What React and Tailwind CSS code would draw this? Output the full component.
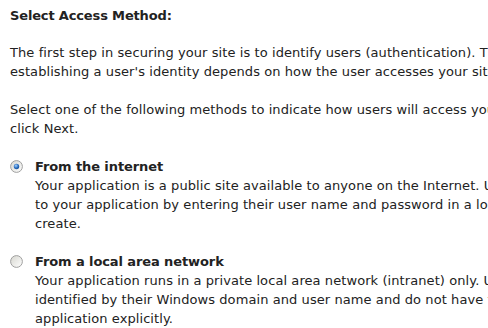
const lines = {
  intro: [
    "The first step in securing your site is to identify users (authentication). The method of",
    "establishing a user's identity depends on how the user accesses your site.",
  ],
  select: [
    "Select one of the following methods to indicate how users will access your site, and then",
    "click Next.",
  ],
}

const options = [
  {
    title: 'From the internet',
    checked: true,
    body: [
      'Your application is a public site available to anyone on the Internet. Users will log on',
      'to your application by entering their user name and password in a login form that you',
      'create.',
    ],
  },
  {
    title: 'From a local area network',
    checked: false,
    body: [
      'Your application runs in a private local area network (intranet) only. Users will be',
      'identified by their Windows domain and user name and do not have to log on to your',
      'application explicitly.',
    ],
  },
]

function Radio({ checked }) {
  const id = checked ? 'rg1' : 'rg0'
  return (
    <svg width="13" height="13" viewBox="0 0 13 13" className="shrink-0">
      <defs>
        <linearGradient id={id} x1="0" y1="0" x2="1" y2="1">
          <stop offset="0" stopColor="#d6d6cf" />
          <stop offset="1" stopColor="#ffffff" />
        </linearGradient>
        <radialGradient id="dot" cx="0.4" cy="0.35" r="0.7">
          <stop offset="0" stopColor="#a8d4ff" />
          <stop offset="0.6" stopColor="#2c6fc0" />
          <stop offset="1" stopColor="#174f94" />
        </radialGradient>
      </defs>
      <circle cx="6.5" cy="6.5" r="5.9" fill={`url(#${id})`} stroke="#a0a0a0" strokeWidth="1" />
      {checked && <circle cx="6.5" cy="6.5" r="2.7" fill="url(#dot)" />}
    </svg>
  )
}

export default function App() {
  return (
    <div
      className="w-[488px] h-[328px] overflow-hidden bg-white text-[#222] text-[13px] leading-[19px] tracking-[0.08px] whitespace-nowrap pl-[10px] pt-[6px]"
      style={{ fontFamily: '"DejaVu Sans", Verdana, sans-serif' }}
    >
      <p className="font-bold tracking-[-0.15px]">Select Access Method:</p>

      <div className="mt-[18px]">
        {lines.intro.map(l => <p key={l}>{l}</p>)}
      </div>

      <div className="mt-[19px]">
        {lines.select.map(l => <p key={l}>{l}</p>)}
      </div>

      {options.map(o => (
        <div key={o.title} className="mt-[19px] flex">
          <div className="w-[25px] shrink-0 pt-[3px] flex">
            <Radio checked={o.checked} />
          </div>
          <div>
            <p className="font-bold tracking-[-0.1px]">{o.title}</p>
            {o.body.map(l => <p key={l}>{l}</p>)}
          </div>
        </div>
      ))}
    </div>
  )
}
